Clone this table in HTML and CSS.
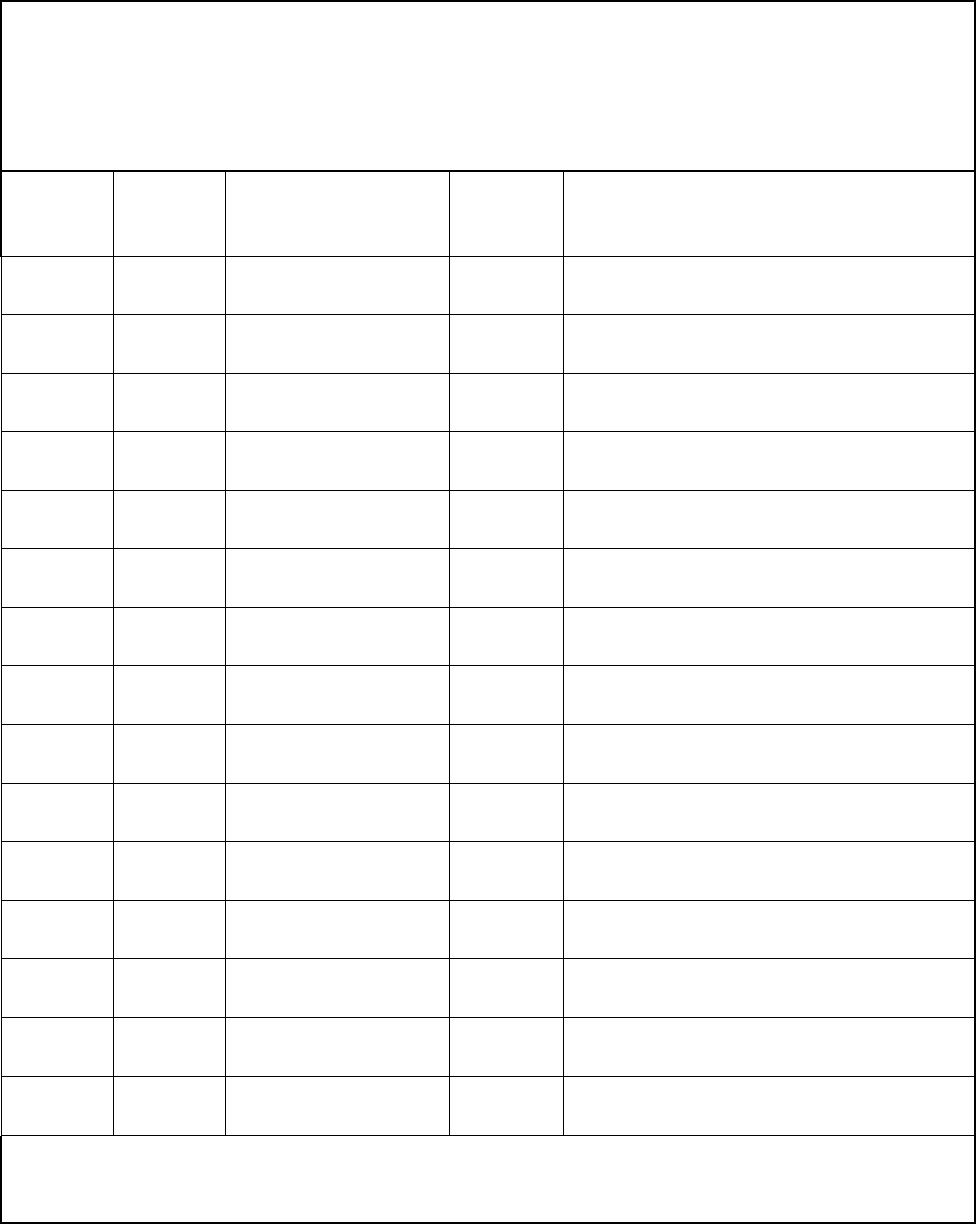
FILE: index.html
```html
<!DOCTYPE html>
<html lang="en">
<head>
<meta charset="utf-8">
<title>Table</title>
<link rel="stylesheet" href="styles.css">
</head>
<body>
<div class="sheet">
  <div class="title"></div>
  <div class="cell head first"></div>
  <div class="cell head"></div>
  <div class="cell head"></div>
  <div class="cell head"></div>
  <div class="cell head last"></div>

  <div class="cell first"></div><div class="cell"></div><div class="cell"></div><div class="cell"></div><div class="cell last"></div>
  <div class="cell first"></div><div class="cell"></div><div class="cell"></div><div class="cell"></div><div class="cell last"></div>
  <div class="cell first"></div><div class="cell"></div><div class="cell"></div><div class="cell"></div><div class="cell last"></div>
  <div class="cell first"></div><div class="cell"></div><div class="cell"></div><div class="cell"></div><div class="cell last"></div>
  <div class="cell first"></div><div class="cell"></div><div class="cell"></div><div class="cell"></div><div class="cell last"></div>
  <div class="cell first"></div><div class="cell"></div><div class="cell"></div><div class="cell"></div><div class="cell last"></div>
  <div class="cell first"></div><div class="cell"></div><div class="cell"></div><div class="cell"></div><div class="cell last"></div>
  <div class="cell first"></div><div class="cell"></div><div class="cell"></div><div class="cell"></div><div class="cell last"></div>
  <div class="cell first"></div><div class="cell"></div><div class="cell"></div><div class="cell"></div><div class="cell last"></div>
  <div class="cell first"></div><div class="cell"></div><div class="cell"></div><div class="cell"></div><div class="cell last"></div>
  <div class="cell first"></div><div class="cell"></div><div class="cell"></div><div class="cell"></div><div class="cell last"></div>
  <div class="cell first"></div><div class="cell"></div><div class="cell"></div><div class="cell"></div><div class="cell last"></div>
  <div class="cell first"></div><div class="cell"></div><div class="cell"></div><div class="cell"></div><div class="cell last"></div>
  <div class="cell first"></div><div class="cell"></div><div class="cell"></div><div class="cell"></div><div class="cell last"></div>
  <div class="cell first"></div><div class="cell"></div><div class="cell"></div><div class="cell"></div><div class="cell last"></div>

  <div class="footer"></div>
</div>
</body>
</html>
```

FILE: styles.css
```css
html, body {
  margin: 0;
  padding: 0;
  background: #fff;
  font-family: "Liberation Sans", Arial, sans-serif;
}

.sheet {
  width: 976px;
  display: grid;
  grid-template-columns: 114px 112px 224px 114px 412px;
  grid-template-rows: 172px 85px 58px 59px 58px 59px 58px 59px 58px 59px 59px 58px 59px 58px 59px 59px 59px 88px;
}

.sheet > div {
  box-sizing: border-box;
}

.title {
  grid-column: 1 / -1;
  border: 2px solid #000;
}

.cell {
  border-right: 1px solid #000;
  border-bottom: 1px solid #000;
}

.cell.first {
  border-left: 1px solid #000;
  margin-left: 1px;
}

.cell.head.first {
  border-left: 2px solid #000;
  margin-left: 0;
}

.cell.last {
  border-right: 2px solid #000;
}

.footer {
  grid-column: 1 / -1;
  border-left: 2px solid #000;
  border-right: 2px solid #000;
  border-bottom: 2px solid #000;
}
```
